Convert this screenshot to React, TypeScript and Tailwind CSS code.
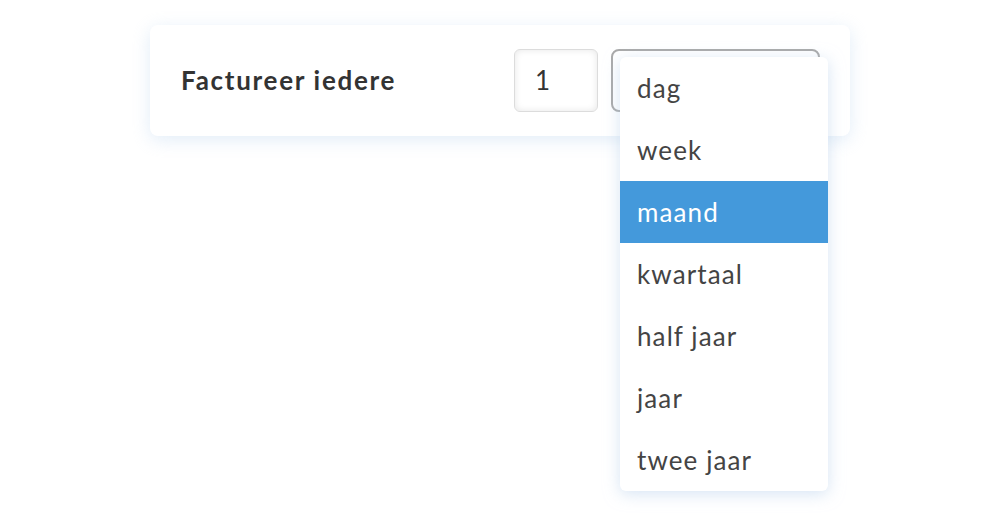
import React from 'react';

const options = ['dag', 'week', 'maand', 'kwartaal', 'half jaar', 'jaar', 'twee jaar'];

export default function App() {
  const selected = 'maand';

  return (
    <div className="min-h-[530px] w-full bg-white pt-[25px] font-['Lato','Noto_Sans',sans-serif]">
      <div className="mx-auto flex h-[111px] w-[700px] items-center rounded-lg bg-white pl-[31px] pr-[30px] shadow-[0_4px_18px_rgba(190,215,240,0.45)]">
        <span className="flex-1 text-[26px] font-bold tracking-[1.7px] text-[#333]">Factureer iedere</span>
        <div className="flex h-[63px] w-[84px] items-center rounded-md border border-[#dcdcdc] bg-white pl-[20px] text-[26px] text-[#333] shadow-[inset_0_0_7px_rgba(0,0,0,0.1)]">
          1
        </div>
        <div className="relative ml-[13px] h-[63px] w-[209px] rounded-lg border-2 border-[#a9a9a9] bg-white">
          <ul className="absolute left-[7px] top-[6px] z-10 w-[208px] overflow-hidden rounded-md bg-white shadow-[0_3px_16px_rgba(180,205,235,0.55)]">
            {options.map((opt) => (
              <li
                key={opt}
                className={
                  opt === selected
                    ? 'flex h-[62px] items-center bg-[#4499db] pl-[17px] text-[26px] tracking-[1.1px] text-white'
                    : 'flex h-[62px] items-center pl-[17px] text-[26px] tracking-[1.1px] text-[#444]'
                }
              >
                {opt}
              </li>
            ))}
          </ul>
        </div>
      </div>
    </div>
  );
}
